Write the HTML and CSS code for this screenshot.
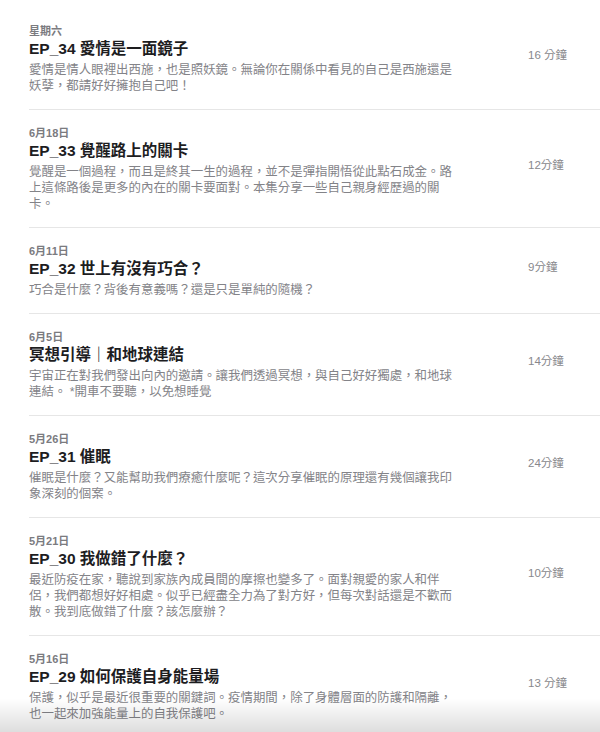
FILE: index.html
```html
<!DOCTYPE html>
<html lang="zh-Hant">
<head>
<meta charset="utf-8">
<title>Episodes</title>
<link rel="stylesheet" href="styles.css">
</head>
<body>
<div class="episode-list">
    <div class="episode">
        <div class="episode-info">
            <div class="episode-date">星期六</div>
            <div class="episode-title">EP_34 愛情是一面鏡子</div>
            <div class="episode-desc">愛情是情人眼裡出西施，也是照妖鏡。無論你在關係中看見的自己是西施還是妖孽，都請好好擁抱自己吧！</div>
        </div>
        <div class="episode-duration">16 分鐘</div>
    </div>
    <div class="episode">
        <div class="episode-info">
            <div class="episode-date">6月18日</div>
            <div class="episode-title">EP_33 覺醒路上的關卡</div>
            <div class="episode-desc">覺醒是一個過程，而且是終其一生的過程，並不是彈指開悟從此點石成金。路上這條路後是更多的內在的關卡要面對。本集分享一些自己親身經歷過的關卡。</div>
        </div>
        <div class="episode-duration">12分鐘</div>
    </div>
    <div class="episode">
        <div class="episode-info">
            <div class="episode-date">6月11日</div>
            <div class="episode-title">EP_32 世上有沒有巧合？</div>
            <div class="episode-desc">巧合是什麼？背後有意義嗎？還是只是單純的隨機？</div>
        </div>
        <div class="episode-duration">9分鐘</div>
    </div>
    <div class="episode">
        <div class="episode-info">
            <div class="episode-date">6月5日</div>
            <div class="episode-title">冥想引導｜和地球連結</div>
            <div class="episode-desc">宇宙正在對我們發出向內的邀請。讓我們透過冥想，與自己好好獨處，和地球連結。 *開車不要聽，以免想睡覺</div>
        </div>
        <div class="episode-duration">14分鐘</div>
    </div>
    <div class="episode">
        <div class="episode-info">
            <div class="episode-date">5月26日</div>
            <div class="episode-title">EP_31 催眠</div>
            <div class="episode-desc">催眠是什麼？又能幫助我們療癒什麼呢？這次分享催眠的原理還有幾個讓我印象深刻的個案。</div>
        </div>
        <div class="episode-duration">24分鐘</div>
    </div>
    <div class="episode">
        <div class="episode-info">
            <div class="episode-date">5月21日</div>
            <div class="episode-title">EP_30 我做錯了什麼？</div>
            <div class="episode-desc">最近防疫在家，聽說到家族內成員間的摩擦也變多了。面對親愛的家人和伴侶，我們都想好好相處。似乎已經盡全力為了對方好，但每次對話還是不歡而散。我到底做錯了什麼？該怎麼辦？</div>
        </div>
        <div class="episode-duration">10分鐘</div>
    </div>
    <div class="episode">
        <div class="episode-info">
            <div class="episode-date">5月16日</div>
            <div class="episode-title">EP_29 如何保護自身能量場</div>
            <div class="episode-desc">保護，似乎是最近很重要的關鍵詞。疫情期間，除了身體層面的防護和隔離，<br>也一起來加強能量上的自我保護吧。</div>
        </div>
        <div class="episode-duration">13 分鐘</div>
    </div>
</div>
<div class="bottom-fade"></div>
</body>
</html>
```

FILE: styles.css
```css
body {
  margin: 0;
  font-family: "Liberation Sans", "Noto Sans CJK TC", sans-serif;
  background: #fff;
  color: #1d1d1f;
  overflow: hidden;
}
.episode-list {
  padding-top: 8px;
}
.episode {
  display: flex;
  align-items: center;
  margin-left: 29px;
  padding: 15px 0;
  border-bottom: 1px solid #e6e6e6;
}
.episode-info {
  width: 430px;
}
.episode-date {
  font-size: 11px;
  line-height: 16px;
  font-weight: bold;
  color: #7b7b7f;
}
.episode-title {
  font-size: 15.5px;
  line-height: 20px;
  font-weight: bold;
  color: #1d1d1f;
}
.episode-desc {
  margin-top: 3px;
  font-size: 12.45px;
  line-height: 16px;
  color: #838388;
}
.episode-duration {
  margin-left: auto;
  margin-bottom: 9px;
  width: 72px;
  font-size: 11.5px;
  color: #88888c;
}
.bottom-fade {
  position: fixed;
  left: 0;
  right: 0;
  bottom: 0;
  height: 34px;
  background: linear-gradient(rgba(0, 0, 0, 0), rgba(0, 0, 0, 0.13));
}
```
